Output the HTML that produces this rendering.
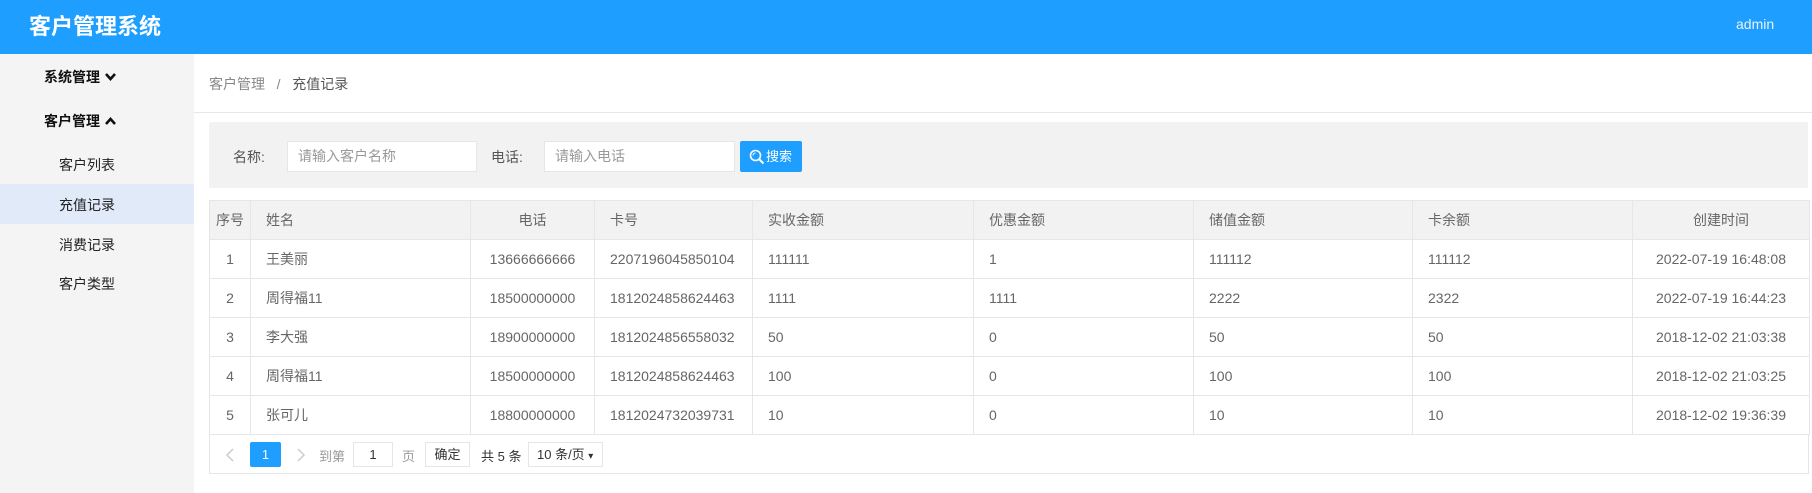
<!DOCTYPE html>
<html><head><meta charset="utf-8"><style>
*{margin:0;padding:0;box-sizing:border-box}
body{width:1812px;height:493px;overflow:hidden;background:#fff;font-family:"Liberation Sans","Noto Sans CJK SC",sans-serif;color:#666;font-size:14px;position:relative}
.hd{position:absolute;left:0;top:0;width:1812px;height:54px;background:#1e9fff}
.hd .t{position:absolute;left:29px;top:9px;font-size:22px;font-weight:bold;color:#fff}
.hd .a{position:absolute;left:1736px;top:16px;font-size:14px;color:#e8f2ff}
.sb{position:absolute;left:0;top:54px;width:194px;height:439px;background:#f4f4f4}
.sb div{position:absolute;font-size:14px;color:#111}
.sb .g{left:44px;font-weight:bold}
.sb .s{left:59px;color:#222}
.sb .hl{left:0;width:194px;height:40px;background:#e0eaf9}
.ab{position:absolute}
.bc{left:209px;top:74px;font-size:14px;color:#888}
.bc b{font-weight:normal;color:#555}
.line{left:194px;top:112px;width:1618px;height:1px;background:#e6e6e6}
.sp{left:209px;top:122px;width:1599px;height:66px;background:#f2f2f2;border-radius:2px}
.lbl{font-size:14px;color:#555}
.inp{background:#fff;border:1px solid #e6e6e6;height:31px;top:141px;padding-left:10px;line-height:29px;color:#999;font-size:14px}
.btn{left:740px;top:141px;width:62px;height:31px;background:#1e9fff;color:#fff;font-size:13px;line-height:31px;border-radius:2px;padding-left:26px}
table{position:absolute;left:209px;top:200px;width:1600px;border-collapse:collapse;table-layout:fixed}
td,th{border:1px solid #e6e6e6;height:39px;font-weight:normal;font-size:14px;color:#666;padding:0 15px;text-align:left;white-space:nowrap}
th{background:#f2f2f2}
.c{text-align:center;padding:0}
.pg{position:absolute;left:209px;top:434px;width:1600px;height:40px;border:1px solid #e6e6e6;border-top:none}
.pg div{position:absolute;font-size:13px}
</style></head><body>
<div class="hd"><div class="t">客户管理系统</div><div class="a">admin</div></div>
<div class="sb">
<div class="g" style="top:13px">系统管理 <svg width="13" height="10" viewBox="0 0 13 10" style="vertical-align:0"><path d="M2 2l4.5 5L11 2" stroke="#111" stroke-width="2.6" fill="none"/></svg></div>
<div class="g" style="top:57px">客户管理 <svg width="13" height="10" viewBox="0 0 13 10"><path d="M2 8l4.5-5L11 8" stroke="#111" stroke-width="2.6" fill="none"/></svg></div>
<div class="s" style="top:101px">客户列表</div>
<div class="hl" style="top:130px"></div>
<div class="s" style="top:141px">充值记录</div>
<div class="s" style="top:181px">消费记录</div>
<div class="s" style="top:220px">客户类型</div>
</div>
<div class="ab bc">客户管理 &nbsp;&nbsp;/&nbsp;&nbsp; <b>充值记录</b></div>
<div class="ab line"></div>
<div class="ab sp"></div>
<div class="ab lbl" style="left:233px;top:147px">名称:</div>
<div class="ab inp" style="left:287px;width:190px">请输入客户名称</div>
<div class="ab lbl" style="left:491px;top:147px">电话:</div>
<div class="ab inp" style="left:544px;width:191px">请输入电话</div>
<div class="ab btn"><svg style="position:absolute;left:9px;top:8px" width="16" height="16" viewBox="0 0 16 16"><circle cx="6.5" cy="6.5" r="5" stroke="#fff" stroke-width="1.6" fill="none"/><path d="M10 10l4.5 4.5" stroke="#fff" stroke-width="2"/><path d="M4 6.5a2.5 2.5 0 0 1 2.5-2.5" stroke="#fff" stroke-width="1" fill="none"/></svg>搜索</div>
<table>
<colgroup><col style="width:41px"><col style="width:220px"><col style="width:124px"><col style="width:158px"><col style="width:221px"><col style="width:220px"><col style="width:219px"><col style="width:220px"><col style="width:177px"></colgroup>
<tr><th class="c">序号</th><th>姓名</th><th class="c">电话</th><th>卡号</th><th>实收金额</th><th>优惠金额</th><th>储值金额</th><th>卡余额</th><th class="c">创建时间</th></tr>
<tr><td class="c">1</td><td>王美丽</td><td class="c">13666666666</td><td>2207196045850104</td><td>111111</td><td>1</td><td>111112</td><td>111112</td><td class="c">2022-07-19 16:48:08</td></tr>
<tr><td class="c">2</td><td>周得福11</td><td class="c">18500000000</td><td>1812024858624463</td><td>1111</td><td>1111</td><td>2222</td><td>2322</td><td class="c">2022-07-19 16:44:23</td></tr>
<tr><td class="c">3</td><td>李大强</td><td class="c">18900000000</td><td>1812024856558032</td><td>50</td><td>0</td><td>50</td><td>50</td><td class="c">2018-12-02 21:03:38</td></tr>
<tr><td class="c">4</td><td>周得福11</td><td class="c">18500000000</td><td>1812024858624463</td><td>100</td><td>0</td><td>100</td><td>100</td><td class="c">2018-12-02 21:03:25</td></tr>
<tr><td class="c">5</td><td>张可儿</td><td class="c">18800000000</td><td>1812024732039731</td><td>10</td><td>0</td><td>10</td><td>10</td><td class="c">2018-12-02 19:36:39</td></tr>
</table>
<div class="pg">
<svg style="position:absolute;left:15px;top:14px" width="10" height="14" viewBox="0 0 10 14"><path d="M8 1L2 7l6 6" stroke="#ccc" stroke-width="1.5" fill="none"/></svg>
<div style="left:40px;top:8px;width:31px;height:25px;background:#1e9fff;color:#fff;text-align:center;line-height:25px;border-radius:2px">1</div>
<svg style="position:absolute;left:86px;top:14px" width="10" height="14" viewBox="0 0 10 14"><path d="M2 1l6 6-6 6" stroke="#ccc" stroke-width="1.5" fill="none"/></svg>
<div style="left:109px;top:12px;color:#999">到第</div>
<div style="left:143px;top:8px;width:40px;height:25px;border:1px solid #e6e6e6;text-align:center;line-height:23px;color:#333">1</div>
<div style="left:192px;top:12px;color:#999">页</div>
<div style="left:215px;top:8px;width:45px;height:25px;border:1px solid #e6e6e6;text-align:center;line-height:23px;color:#333">确定</div>
<div style="left:271px;top:12px;color:#333">共 5 条</div>
<div style="left:318px;top:8px;width:75px;height:25px;border:1px solid #e6e6e6;line-height:23px;padding-left:8px;color:#333">10 条/页 <span style="font-size:10px">▾</span></div>
</div>
</body></html>
